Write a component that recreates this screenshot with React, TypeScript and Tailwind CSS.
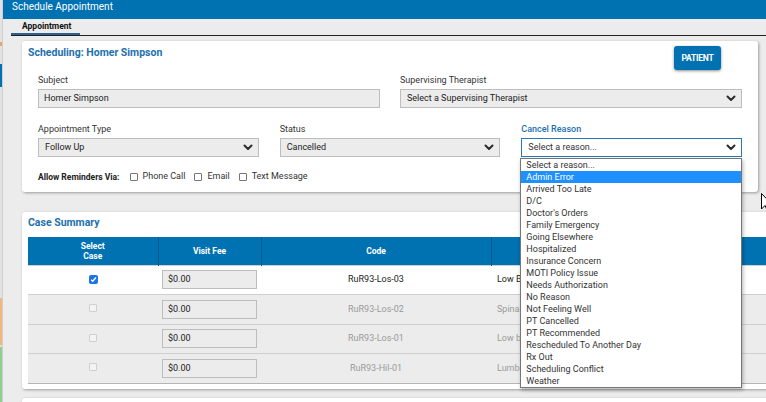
import type { ReactNode } from "react";

const REASONS = [
  "Select a reason...",
  "Admin Error",
  "Arrived Too Late",
  "D/C",
  "Doctor's Orders",
  "Family Emergency",
  "Going Elsewhere",
  "Hospitalized",
  "Insurance Concern",
  "MOTI Policy Issue",
  "Needs Authorization",
  "No Reason",
  "Not Feeling Well",
  "PT Cancelled",
  "PT Recommended",
  "Rescheduled To Another Day",
  "Rx Out",
  "Scheduling Conflict",
  "Weather",
];

const CASES = [
  { code: "RuR93-Los-03", dx: "Low Back Pain", active: true },
  { code: "RuR93-Los-02", dx: "Spinal Stenosis", active: false },
  { code: "RuR93-Los-01", dx: "Low back pain", active: false },
  { code: "RuR93-Hil-01", dx: "Lumbar Strain", active: false },
];

function Chevron() {
  return (
    <svg width="10" height="7" viewBox="0 0 10 7" className="shrink-0">
      <path
        d="M1.5 1.5 L5 5 L8.5 1.5"
        fill="none"
        stroke="#2b2b2b"
        strokeWidth="2"
        strokeLinecap="round"
        strokeLinejoin="round"
      />
    </svg>
  );
}

function Field({
  label,
  labelClass = "text-[#333]",
  children,
}: {
  label: string;
  labelClass?: string;
  children: ReactNode;
}) {
  return (
    <div className="flex flex-col">
      <label className={`h-[12px] text-[9px] leading-[12px] ${labelClass}`}>
        {label}
      </label>
      <div className="mt-[3px]">{children}</div>
    </div>
  );
}

function SelectBox({ value }: { value: string }) {
  return (
    <div className="flex h-[19px] items-center justify-between border border-[#bdbdbd] bg-[#ececec] pl-[6px] pr-[5px] text-[9px] text-[#222]">
      <span>{value}</span>
      <Chevron />
    </div>
  );
}

function Box({ checked, disabled }: { checked?: boolean; disabled?: boolean }) {
  if (checked) {
    return (
      <span className="inline-flex h-[9px] w-[9px] items-center justify-center rounded-[2px] bg-[#1a73e8]">
        <svg width="7" height="7" viewBox="0 0 8 8">
          <path d="M1.3 4.2 L3.2 6 L6.8 1.8" fill="none" stroke="#fff" strokeWidth="1.6" />
        </svg>
      </span>
    );
  }
  return (
    <span
      className={`inline-block h-[8px] w-[8px] rounded-[1px] border ${
        disabled ? "border-[#d0d0d0] bg-[#f3f3f3]" : "border-[#767676] bg-white"
      }`}
    />
  );
}

export default function App() {
  return (
    <div className="relative flex h-[402px] w-[766px] overflow-hidden bg-[#ececec] font-['Roboto',sans-serif]">
      {/* page behind the modal */}
      <div className="flex w-[3px] shrink-0 flex-col border-r border-[#cfcfcf] bg-[#e2e2e2]">
        <div className="h-[42px]" />
        <div className="h-[4px] bg-[#e6a868]" />
        <div className="h-[18px]" />
        <div className="h-[23px] bg-[#0072b2]" />
        <div className="h-[211px]" />
        <div className="h-[47px] bg-[#efb878]" />
        <div className="h-[2px]" />
        <div className="h-[55px] bg-[#8fd08c]" />
      </div>

      <div className="flex min-w-0 flex-1 flex-col">
        <div className="h-[19px] shrink-0 bg-[#0072b2] pl-[9px] text-[10px] leading-[13px] text-white">
          Schedule Appointment
        </div>

        <div className="ml-[8px] flex shrink-0 border-b border-[#222]">
          <div className="h-[16px] border-b-2 border-[#2a6190] pl-[11px] pr-[9px] pt-[1px] text-[8.5px] font-bold leading-[13px] text-[#111]">
            Appointment
          </div>
        </div>

        {/* appointment card */}
        <div className="ml-[19px] mt-[5px] w-[736px] shrink-0 rounded-[3px] bg-white pb-[9px] pt-[5px] shadow-[1px_1px_3px_rgba(0,0,0,0.35)]">
          <div className="flex items-start justify-between pl-[6px] pr-[37px]">
            <h2 className="text-[10.5px] font-bold leading-[14px] text-[#1d70ae]">
              Scheduling: Homer Simpson
            </h2>
            <button
              type="button"
              className="h-[24px] w-[47px] rounded-[3px] bg-[#0072b2] text-[8.5px] font-bold tracking-tight text-white shadow-[0_1px_3px_rgba(0,0,0,0.45)]"
            >
              PATIENT
            </button>
          </div>

          <div className="mt-[4px] px-[16px]">
            <div className="grid grid-cols-2 gap-x-[20px]">
              <Field label="Subject">
                <div className="flex h-[19px] items-center border border-[#bdbdbd] bg-[#ececec] pl-[5px] text-[9px] text-[#222]">
                  Homer Simpson
                </div>
              </Field>
              <Field label="Supervising Therapist">
                <SelectBox value="Select a Supervising Therapist" />
              </Field>
            </div>

            <div className="mt-[15px] grid grid-cols-3 gap-x-[21px]">
              <Field label="Appointment Type">
                <SelectBox value="Follow Up" />
              </Field>
              <Field label="Status">
                <SelectBox value="Cancelled" />
              </Field>
              <Field label="Cancel Reason" labelClass="font-medium text-[#1d70ae]">
                <div className="relative">
                  <div className="flex h-[19px] items-center justify-between border border-[#2a78b4] bg-white pl-[6px] pr-[5px] text-[9px] text-[#333]">
                    <span>Select a reason...</span>
                    <Chevron />
                  </div>
                  <ul className="absolute left-[-1px] top-[20px] z-10 w-[222px] border border-[#767676] bg-white shadow-[1px_2px_4px_rgba(0,0,0,0.3)]">
                    {REASONS.map((r, i) => (
                      <li
                        key={r}
                        className={`h-[12px] pl-[5px] text-[9px] leading-[12px] ${
                          i === 1 ? "bg-[#1e90ff] text-white" : "text-[#333]"
                        }`}
                      >
                        {r}
                      </li>
                    ))}
                  </ul>
                </div>
              </Field>
            </div>

            <div className="mt-[14px] flex h-[12px] items-center text-[9px] text-[#333]">
              <span className="text-[8.5px] font-bold text-[#222]">Allow Reminders Via:</span>
              <label className="ml-[10px] flex items-center gap-[5px]">
                <Box />
                Phone Call
              </label>
              <label className="ml-[9px] flex items-center gap-[5px]">
                <Box />
                Email
              </label>
              <label className="ml-[9px] flex items-center gap-[5px]">
                <Box />
                Text Message
              </label>
            </div>
          </div>
        </div>

        {/* case summary card */}
        <div className="ml-[19px] mt-[20px] w-[900px] shrink-0 rounded-[3px] bg-white pb-[5px] pl-[6px] pt-[4px] shadow-[1px_1px_3px_rgba(0,0,0,0.35)]">
          <h2 className="text-[10.5px] font-bold leading-[14px] text-[#1d70ae]">Case Summary</h2>
          <table className="mt-[7px] w-[894px] table-fixed border-collapse text-[9px]">
            <colgroup>
              <col className="w-[130px]" />
              <col className="w-[103px]" />
              <col className="w-[230px]" />
              <col />
            </colgroup>
            <thead>
              <tr className="h-[28px] bg-[#0072b2] text-[8.5px] font-bold leading-[10px] text-white">
                <th className="border-r border-[#005a8e] font-bold">
                  Select
                  <br />
                  Case
                </th>
                <th className="border-r border-[#005a8e] font-bold">Visit Fee</th>
                <th className="border-r border-[#005a8e] font-bold">Code</th>
                <th className="font-bold">Diagnosis</th>
              </tr>
            </thead>
            <tbody>
              {CASES.map((c, i) => (
                <tr
                  key={c.code}
                  className={`h-[29.5px] border-t border-[#cfcfcf] ${
                    c.active ? "bg-white text-[#222]" : "bg-[#ececec] text-[#9a9a9a]"
                  } ${i === CASES.length - 1 ? "border-b border-b-[#b5b5b5]" : ""}`}
                >
                  <td className="text-center leading-none">
                    <Box checked={c.active} disabled={!c.active} />
                  </td>
                  <td className="pl-[4px]">
                    <div className="flex h-[19px] w-[95px] items-center border border-[#bdbdbd] bg-[#ececec] pl-[5px] text-[#222]">
                      $0.00
                    </div>
                  </td>
                  <td className="text-center">{c.code}</td>
                  <td className="pl-[6px]">{c.dx}</td>
                </tr>
              ))}
            </tbody>
          </table>
        </div>

        <div className="ml-[19px] mt-[9px] h-[20px] w-[900px] shrink-0 rounded-[3px] bg-white shadow-[1px_1px_3px_rgba(0,0,0,0.35)]" />
      </div>

      {/* mouse pointer */}
      <svg
        className="absolute left-[761px] top-[193px]"
        width="12"
        height="19"
        viewBox="0 0 12 19"
      >
        <path
          d="M0.5 0.5 L0.5 16 L4 12.5 L6.5 18 L8.5 17 L6 11.5 L11 11.5 Z"
          fill="#fff"
          stroke="#000"
          strokeWidth="1"
        />
      </svg>
    </div>
  );
}
